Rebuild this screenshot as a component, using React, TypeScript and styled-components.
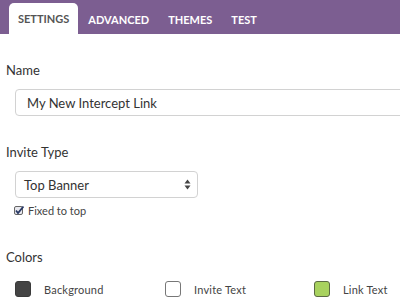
import React from "react"
import styled, { createGlobalStyle } from "styled-components"

const Global = createGlobalStyle`
body {
  margin:0;
  background:#fff;
  font-family:Lato, "Open Sans", sans-serif;
  color:#333;
}
`

const Page = styled.div`
width:400px;
height:307px;
overflow:hidden;
`

const TabBar = styled.div`
display:flex;
align-items:flex-end;
height:34px;
padding-left:9px;
background:#7c5e91;
box-sizing:border-box;
`

const Tab = styled.div<{ $active?: boolean }>`
height:${p => (p.$active ? "31px" : "29px")};
display:flex;
align-items:center;
padding:0 ${p => (p.$active ? "9px" : "9px")};
margin-right:1px;
font-size:11px;
font-weight:700;
letter-spacing:0;
text-transform:uppercase;
color:${p => (p.$active ? "#555" : "#fff")};
background:${p => (p.$active ? "#fff" : "transparent")};
border-radius:5px 5px 0 0;
`

const Body = styled.div`
padding:0 0 0 6px;
`

const Label = styled.div<{ $top: number }>`
font-size:13px;
margin-top:${p => p.$top}px;
color:#333;
`

const Field = styled.div`
padding-left:9px;
`

const TextInput = styled.div`
margin-top:11px;
height:27px;
width:400px;
box-sizing:border-box;
border:1px solid #d2d2d2;
border-radius:4px;
display:flex;
align-items:center;
padding-left:11px;
font-size:13px;
color:#333;
`

const Select = styled.div`
margin-top:11px;
height:27px;
width:183px;
box-sizing:border-box;
border:1px solid #d2d2d2;
border-radius:4px;
display:flex;
align-items:center;
justify-content:space-between;
padding:0 6px 0 8px;
font-size:13px;
color:#333;
`

const Arrows = styled.svg`
width:7px;
height:11px;
`

const CheckRow = styled.label`
display:flex;
align-items:center;
gap:4px;
margin-top:6px;
margin-left:-1px;
font-size:11px;
color:#444;
`

const Box = styled.svg`
width:10px;
height:10px;
`

const Swatches = styled.div`
display:grid;
grid-template-columns:150px 149px 1fr;
margin-top:16px;
`

const SwatchItem = styled.div`
display:flex;
align-items:center;
gap:13px;
font-size:11px;
letter-spacing:0.2px;
color:#444;
`

const Chip = styled.div<{ $color: string; $border: string }>`
width:16px;
height:16px;
box-sizing:border-box;
border-radius:3px;
background:${p => p.$color};
border:1px solid ${p => p.$border};
`

export default function App() {
  return (
    <Page>
      <Global />
      <TabBar>
        <Tab $active>Settings</Tab>
        <Tab>Advanced</Tab>
        <Tab>Themes</Tab>
        <Tab>Test</Tab>
      </TabBar>
      <Body>
        <Label $top={28}>Name</Label>
        <Field>
          <TextInput>My New Intercept Link</TextInput>
        </Field>
        <Label $top={28}>Invite Type</Label>
        <Field>
          <Select>
            Top Banner
            <Arrows viewBox="0 0 7 11">
              <path d="M3.5 0.5 L6.5 4.5 L0.5 4.5 Z" fill="#444" />
              <path d="M3.5 10.5 L6.5 6.5 L0.5 6.5 Z" fill="#444" />
            </Arrows>
          </Select>
          <CheckRow>
            <Box viewBox="0 0 10 10">
              <rect x="0.5" y="0.5" width="8" height="8" rx="1.5" fill="#e8e8ee" stroke="#666" />
              <path d="M2 4.5 L4 7 L9.5 0.5" fill="none" stroke="#2a3a66" strokeWidth="1.8" />
            </Box>
            Fixed to top
          </CheckRow>
        </Field>
        <Label $top={32}>Colors</Label>
        <Field>
          <Swatches>
            <SwatchItem>
              <Chip $color="#444" $border="#3a3a3a" />
              Background
            </SwatchItem>
            <SwatchItem>
              <Chip $color="#fff" $border="#777" />
              Invite Text
            </SwatchItem>
            <SwatchItem>
              <Chip $color="#a8d25e" $border="#5c6a44" />
              Link Text
            </SwatchItem>
          </Swatches>
        </Field>
      </Body>
    </Page>
  )
}
